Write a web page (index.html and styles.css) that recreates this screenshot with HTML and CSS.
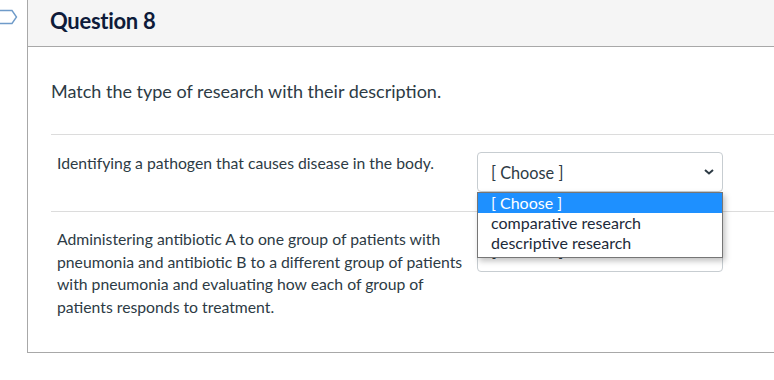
FILE: index.html
```html
<!DOCTYPE html>
<html>
<head>
    <meta charset="utf-8">
    <link rel="stylesheet" href="styles.css">
</head>
<body>
<div class="page">
    <svg class="flag" width="18" height="16" viewBox="0 0 18 16">
        <path d="M-2 1.5 H12 L16.5 8 L12 14.5 H-2" fill="none" stroke="#6f9bc9" stroke-width="1.4"/>
    </svg>
    <div class="card">
        <div class="header">
            <h2 class="title">Question 8</h2>
        </div>
        <div class="qbody">
            <p class="prompt">Match the type of research with their description.</p>
            <div class="answers">
                <div class="row">
                    <div class="desc">Identifying a pathogen that causes disease in the body.</div>
                    <div class="pick">
                        <div class="select">
                            <span>[ Choose ]</span>
                            <svg class="chev" width="10" height="6" viewBox="0 0 10 6">
                                <path d="M1 1 L5 4.5 L9 1" fill="none" stroke="#2d3b45" stroke-width="2"/>
                            </svg>
                        </div>
                        <ul class="menu">
                            <li class="active">[ Choose ]</li>
                            <li>comparative research</li>
                            <li>descriptive research</li>
                        </ul>
                    </div>
                </div>
                <div class="row">
                    <div class="desc">Administering antibiotic A to one group of patients with pneumonia and antibiotic B to a different group of patients with pneumonia and evaluating how each of group of patients responds to treatment.</div>
                    <div class="pick">
                        <div class="select second">
                            <span>[ Choose ]</span>
                            <svg class="chev" width="10" height="6" viewBox="0 0 10 6">
                                <path d="M1 1 L5 4.5 L9 1" fill="none" stroke="#2d3b45" stroke-width="2"/>
                            </svg>
                        </div>
                    </div>
                </div>
            </div>
        </div>
    </div>
</div>
</body>
</html>
```

FILE: styles.css
```css
body {
    margin: 0;
    padding: 0;
    background-color: #ffffff;
    font-family: Lato, "Open Sans", sans-serif;
    color: #2d3b45;
    overflow: hidden;
}

.page {
    position: relative;
    padding-left: 27px;
}

.flag {
    position: absolute;
    left: 0;
    top: 9px;
}

.card {
    border-left: 1px solid #a8a8a8;
    border-bottom: 1px solid #a8a8a8;
}

.header {
    height: 46px;
    background-color: #f5f5f5;
    border-bottom: 1px solid #a8a8a8;
    padding-left: 22px;
    display: flex;
    align-items: center;
}

.title {
    margin: 0 0 6px 0;
    font-size: 22px;
    font-weight: 700;
    color: #0e1b3a;
    letter-spacing: -0.3px;
}

.qbody {
    padding: 0 0 34px 23px;
}

.prompt {
    margin: 0;
    padding: 31px 0 30px 0;
    font-size: 18px;
    line-height: 26px;
}

.answers {
    border-top: 1px solid #dcdcdc;
}

.row {
    display: flex;
    padding: 17px 0 19px 6px;
    border-bottom: 1px solid #dcdcdc;
}

.row:last-child {
    border-bottom: none;
    padding-top: 16px;
    padding-bottom: 0;
}

.desc {
    width: 412px;
    flex: none;
    font-size: 15.75px;
    line-height: 22.5px;
}

.pick {
    position: relative;
    margin-left: 8px;
}

.select {
    box-sizing: border-box;
    width: 246px;
    height: 40px;
    border: 1px solid #c7cdd1;
    border-radius: 4px;
    background-color: #fff;
    display: flex;
    align-items: center;
    justify-content: space-between;
    padding: 0 8px 0 13px;
    font-size: 16.3px;
    color: #2d3b45;
}

.select span {
    padding-top: 1px;
}

.second {
    margin-top: 4px;
}

.second span {
    padding-top: 0;
    padding-bottom: 3px;
}

.menu {
    position: absolute;
    top: 40px;
    left: 0;
    z-index: 5;
    box-sizing: border-box;
    width: 246px;
    margin: 0;
    padding: 0 0 4px 0;
    list-style: none;
    background-color: #fff;
    border: 1px solid #767676;
    box-shadow: 2px 3px 6px rgba(0, 0, 0, 0.25);
    font-size: 16px;
    line-height: 20px;
}

.menu li {
    padding-left: 13px;
    color: #1c2a3a;
}

.menu .active {
    background-color: #1e90ff;
    color: #fff;
}
```
